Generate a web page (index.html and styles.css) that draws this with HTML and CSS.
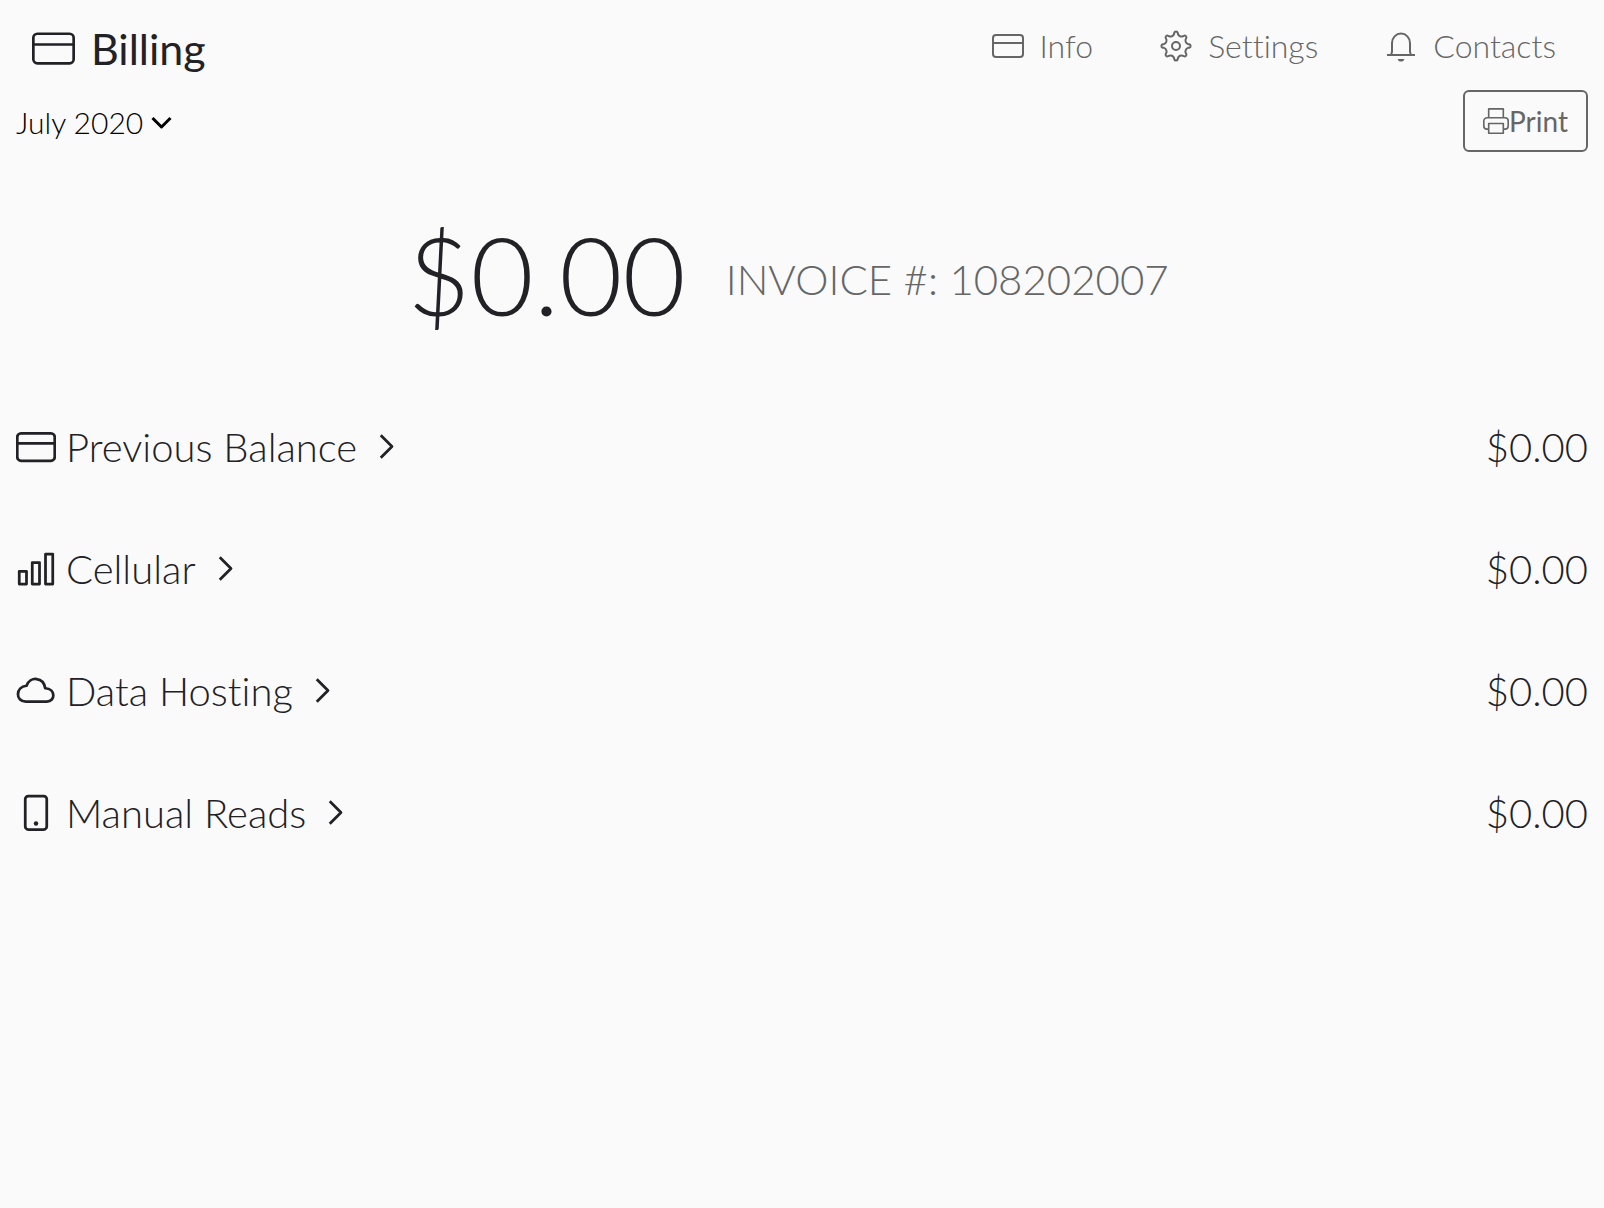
FILE: index.html
```html
<!DOCTYPE html>
<html lang="en">
  <head>
    <meta charset="UTF-8" />
    <meta name="viewport" content="width=device-width, initial-scale=1.0" />
    <title>Billing</title>
    <link rel="stylesheet" href="styles.css">
  </head>
  <body>
    <svg class="sprite" aria-hidden="true">
      <symbol id="card" viewBox="0 0 16 16">
        <rect x="0.5" y="2.5" width="15" height="11" rx="1.5" />
        <path d="M0.5 6.5h15" />
      </symbol>
      <symbol id="gear" viewBox="0 0 16 16">
        <circle cx="8" cy="8" r="2" />
        <path d="M8.837 1.326c-.246-.835-1.428-.835-1.674 0l-.094.619A1.873 1.873 0 0 1 4.377 3.06l-.292-.16c-.764-.415-1.6.42-1.184 1.185l.159.292a1.873 1.873 0 0 1-1.115 2.692l-.619.094c-.835.246-.835 1.428 0 1.674l.619.094a1.873 1.873 0 0 1 1.115 2.693l-.16.291c-.415.764.42 1.6 1.185 1.184l.292-.159a1.873 1.873 0 0 1 2.692 1.116l.094.618c.246.835 1.428.835 1.674 0l.094-.619a1.873 1.873 0 0 1 2.693-1.115l.291.16c.764.415 1.6-.42 1.184-1.185l-.159-.291a1.873 1.873 0 0 1 1.116-2.693l.618-.094c.835-.246.835-1.428 0-1.674l-.619-.094a1.873 1.873 0 0 1-1.115-2.692l.16-.292c.415-.764-.42-1.6-1.185-1.184l-.291.159A1.873 1.873 0 0 1 8.93 1.945z" />
      </symbol>
      <symbol id="bell" viewBox="0 0 16 16">
        <path d="M1 12.500h14M3 12.500l.5-1.500V6.500a4.500 4.700 0 0 1 9 0V11l.5 1.500" />
        <path class="solid" d="M6.300 14.500h3.400c-.3 1.700-3.100 1.700-3.400 0z" />
      </symbol>
      <symbol id="printer" viewBox="0 0 16 16">
        <path d="M3.500 6V.5h9V6M3.500 13H2.500a2 2 0 0 1-2-2V8a2 2 0 0 1 2-2h11a2 2 0 0 1 2 2v3a2 2 0 0 1-2 2h-1M3.500 9.500h9v6h-9z" />
      </symbol>
      <symbol id="bars" viewBox="0 0 16 16">
        <path d="M1.300 8.900h2.900v5.100H1.300zM6.500 5.400h2.900V14H6.500zM11.800 2h2.900v12h-2.900z" />
      </symbol>
      <symbol id="cloud" viewBox="0 0 16 16">
        <path d="M4.200 5.900c1.400-3.900 6.800-3.600 7.500 1 4.200.2 4.200 5.300.6 5.300H3.900c-4.200 0-4.200-5.800.3-6.300z" />
      </symbol>
      <symbol id="phone" viewBox="0 0 16 16">
        <rect x="3.700" y="1.200" width="8.600" height="13.400" rx="1.200" />
        <circle class="solid" cx="8" cy="12.200" r="0.900" />
      </symbol>
      <symbol id="chevron" viewBox="0 0 16 16">
        <path d="M5.500 3.300l4.500 4.500-4.500 4.500" />
      </symbol>
      <symbol id="chevron-down" viewBox="0 0 22 22">
        <path d="M1.500 7l9 9 9-9" />
      </symbol>
    </svg>

    <header class="topbar">
      <h1 class="brand">
        <svg class="icon"><use href="#card" /></svg>
        Billing
      </h1>
      <nav class="nav">
        <a class="nav-link" href="#info"><svg class="icon"><use href="#card" /></svg>Info</a>
        <a class="nav-link" href="#settings"><svg class="icon"><use href="#gear" /></svg>Settings</a>
        <a class="nav-link" href="#contacts"><svg class="icon"><use href="#bell" /></svg>Contacts</a>
      </nav>
    </header>

    <div class="toolbar">
      <button class="month" type="button">
        July 2020
        <svg class="icon"><use href="#chevron-down" /></svg>
      </button>
      <button class="print" type="button"><svg class="icon"><use href="#printer" /></svg>Print</button>
    </div>

    <main>
      <section class="summary">
        <span class="total">$0.00</span>
        <span class="invoice">INVOICE #: 108202007</span>
      </section>

      <section class="charges">
        <div class="charge">
          <a class="charge-name" href="#previous"><svg class="icon"><use href="#card" /></svg>Previous Balance<svg class="icon"><use href="#chevron" /></svg></a>
          <span>$0.00</span>
        </div>
        <div class="charge">
          <a class="charge-name" href="#cellular"><svg class="icon"><use href="#bars" /></svg>Cellular<svg class="icon"><use href="#chevron" /></svg></a>
          <span>$0.00</span>
        </div>
        <div class="charge">
          <a class="charge-name" href="#hosting"><svg class="icon"><use href="#cloud" /></svg>Data Hosting<svg class="icon"><use href="#chevron" /></svg></a>
          <span>$0.00</span>
        </div>
        <div class="charge">
          <a class="charge-name" href="#reads"><svg class="icon"><use href="#phone" /></svg>Manual Reads<svg class="icon"><use href="#chevron" /></svg></a>
          <span>$0.00</span>
        </div>
      </section>
    </main>
  </body>
</html>
```
FILE: styles.css
```css
* {
  box-sizing: border-box;
}
body {
  margin: 0;
  background: #fafafa;
  color: #212126;
  font-family: Lato, "Liberation Sans", sans-serif;
  font-weight: 300;
  font-variant-ligatures: none;
}
a {
  color: inherit;
  text-decoration: none;
}
button {
  background: none;
  color: inherit;
  font: inherit;
  cursor: pointer;
}
.sprite {
  display: none;
}
.icon {
  flex: none;
  width: 1em;
  height: 1em;
  fill: none;
  stroke: currentColor;
  stroke-width: 1;
  stroke-linejoin: round;
}
.solid {
  fill: currentColor;
  stroke: none;
}
.topbar {
  display: flex;
  justify-content: space-between;
  align-items: center;
  height: 90px;
  padding: 0 48px 0 32px;
}
.brand {
  display: flex;
  align-items: center;
  gap: 16px;
  margin: 6px 0 0;
  font-size: 43px;
  font-weight: 400;
}
.nav {
  display: flex;
  gap: 67px;
}
.nav-link {
  display: flex;
  align-items: center;
  gap: 16px;
  padding-top: 1px;
  color: #666;
  font-size: 32px;
}
.toolbar {
  display: flex;
  justify-content: space-between;
  align-items: center;
  padding: 0 16px;
}
.month {
  display: flex;
  align-items: center;
  gap: 8px;
  padding: 2px 0 0;
  border: 0;
  color: #000;
  font-size: 30px;
}
.month .icon {
  width: 22px;
  height: 22px;
  stroke-width: 3;
}
.print {
  display: flex;
  align-items: center;
  height: 62px;
  padding: 0 18px;
  border: 2px solid #666;
  border-radius: 6px;
  color: #666;
  font-size: 28px;
  font-weight: 400;
}
.print .icon {
  width: 26px;
  height: 26px;
}
.summary {
  display: flex;
  justify-content: center;
  align-items: center;
  gap: 40px;
  padding: 54px 28px 44px 0;
}
.total {
  font-size: 109px;
  line-height: 136px;
}
.invoice {
  padding-top: 10px;
  color: #666;
  font-size: 42px;
}
.charges {
  padding: 0 16px;
}
.charge {
  display: flex;
  justify-content: space-between;
  align-items: center;
  height: 122px;
  font-size: 40px;
}
.charge-name {
  display: flex;
  align-items: center;
  gap: 10px;
}
.charge .icon {
  stroke-width: 1.1;
}
```
